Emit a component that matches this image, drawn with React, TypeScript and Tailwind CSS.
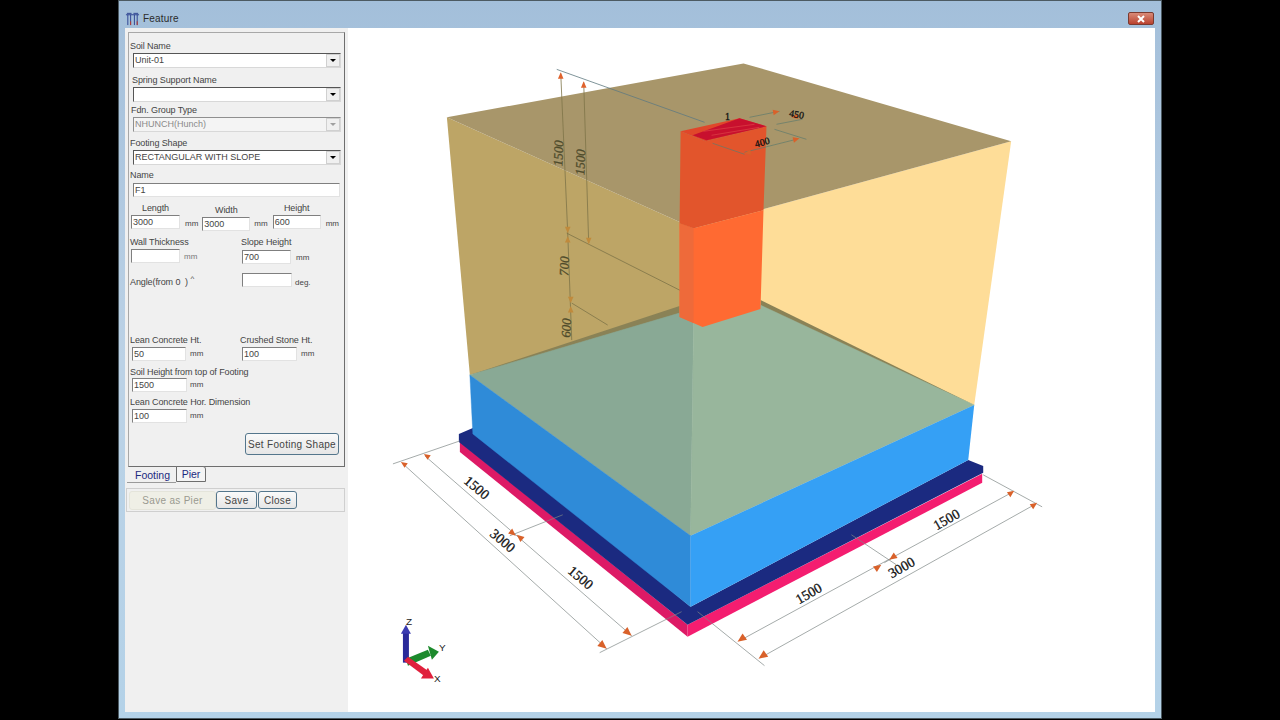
import type { ReactNode } from "react";
import clsx from "clsx";

const FONT = "font-['Liberation_Sans',Arial,sans-serif]";

function Lbl({ className, children }: { className?: string; children: ReactNode }) {
  return <div className={clsx("h-3 leading-3 text-[9px] tracking-[-0.1px] whitespace-nowrap text-[#444444]", className)}>{children}</div>;
}

function Field({ value, className }: { value?: string; className?: string }) {
  return (
    <div
      className={clsx(
        "h-[14px] shrink-0 border border-[#7f7f7f] border-r-[#e2e2e2] border-b-[#e2e2e2] bg-white pl-px text-[9px] leading-[12px] text-[#444444]",
        className
      )}
    >
      {value}
    </div>
  );
}

function Combo({ value, disabled }: { value?: string; disabled?: boolean }) {
  return (
    <div
      className={clsx(
        "mt-px ml-[3px] flex h-[15px] w-[208px] items-center border border-r-[#d8d8d8] border-b-[#d8d8d8] pl-px",
        disabled ? "border-[#8f8f8f] bg-[#f4f4f4] text-[#8a8a8a]" : "border-[#555555] bg-white text-[#444444]"
      )}
    >
      <span className="flex-1 text-[9px] leading-[13px] whitespace-nowrap">{value}</span>
      <span className="flex h-[13px] w-[14px] items-center justify-center border border-[#d0d0d0] bg-[#f0f0f0]">
        <span
          className={clsx(
            "h-0 w-0 border-x-[3px] border-t-[3px] border-x-transparent",
            disabled ? "border-t-[#a0a0a0]" : "border-t-black"
          )}
        />
      </span>
    </div>
  );
}

function Mm({ children = "mm", className }: { children?: ReactNode; className?: string }) {
  return <span className={clsx("text-[8px] leading-3 text-[#444444]", className)}>{children}</span>;
}

function Btn({ children, className }: { children: ReactNode; className?: string }) {
  return (
    <button
      className={clsx(
        "rounded-[3px] border border-[#54768c] bg-gradient-to-b from-[#fafafa] to-[#e6e6e6] text-[10px] tracking-[0.3px] text-[#444444]",
        className
      )}
    >
      {children}
    </button>
  );
}

function FootingForm() {
  return (
    <div className="mt-1 ml-[3px] h-[435px] w-[217px] border border-[#a8a8a8] border-r-[#6e6e6e] border-b-[#6e6e6e] pt-[7px] pl-px">
      <Lbl>Soil Name</Lbl>
      <Combo value="Unit-01" />
      <Lbl className="mt-[6px] ml-0.5">Spring Support Name</Lbl>
      <Combo />
      <Lbl className="mt-0.5 ml-px">Fdn. Group Type</Lbl>
      <Combo value="NHUNCH(Hunch)" disabled />
      <Lbl className="mt-[5px]">Footing Shape</Lbl>
      <Combo value="RECTANGULAR WITH SLOPE" />
      <Lbl className="mt-1">Name</Lbl>
      <Field value="F1" className="mt-0.5 ml-[3px] w-[207px]" />

      <div className="mt-[5px] flex items-start">
        <div className="ml-px w-[49px]">
          <Lbl className="text-center">Length</Lbl>
          <Field value="3000" className="mt-px w-[49px]" />
        </div>
        <Mm className="mt-4 ml-[5px]">mm</Mm>
        <div className="mt-0.5 ml-1 w-[48px]">
          <Lbl className="text-center">Width</Lbl>
          <Field value="3000" className="mt-px w-[48px]" />
        </div>
        <Mm className="mt-4 ml-1">mm</Mm>
        <div className="ml-[5px] w-[48px]">
          <Lbl className="text-center">Height</Lbl>
          <Field value="600" className="mt-px w-[48px]" />
        </div>
        <Mm className="mt-4 ml-[5px]">mm</Mm>
      </div>

      <div className="mt-[5px] flex items-start">
        <div className="w-[110px]">
          <Lbl className="text-[#8f8f8f]">Wall Thickness</Lbl>
          <div className="mt-px flex items-end">
            <Field className="ml-px w-[49px]" />
            <Mm className="ml-1 text-[#777777]">mm</Mm>
          </div>
        </div>
        <div>
          <Lbl className="ml-px">Slope Height</Lbl>
          <div className="mt-0.5 flex items-end">
            <Field value="700" className="ml-0.5 w-[49px]" />
            <Mm className="ml-[5px]">mm</Mm>
          </div>
        </div>
      </div>

      <div className="mt-[9px] flex items-start">
        <div className="w-[112px] pt-[3px]">
          <Lbl className="text-[#8f8f8f]">
            Angle(from 0 &nbsp;) <sup className="text-[8px]">^</sup>
          </Lbl>
        </div>
        <Field className="w-[50px]" />
        <Mm className="mt-1 ml-[3px]">deg.</Mm>
      </div>

      <div className="mt-[45px] flex items-start">
        <div className="w-[110px]">
          <Lbl>Lean Concrete Ht.</Lbl>
          <div className="mt-px flex items-center">
            <Field value="50" className="ml-0.5 w-[54px]" />
            <Mm className="ml-1">mm</Mm>
          </div>
        </div>
        <div>
          <Lbl>Crushed Stone Ht.</Lbl>
          <div className="mt-px flex items-center">
            <Field value="100" className="ml-0.5 w-[55px]" />
            <Mm className="ml-1">mm</Mm>
          </div>
        </div>
      </div>

      <Lbl className="mt-[5px]">Soil Height from top of Footing</Lbl>
      <div className="flex items-center">
        <Field value="1500" className="ml-0.5 w-[55px]" />
        <Mm className="ml-[3px]">mm</Mm>
      </div>
      <Lbl className="mt-1">Lean Concrete Hor. Dimension</Lbl>
      <div className="mt-px flex items-center">
        <Field value="100" className="ml-0.5 w-[55px]" />
        <Mm className="ml-[3px]">mm</Mm>
      </div>

      <div className="mt-[10px] flex justify-end pr-[5px]">
        <Btn className="h-[22px] w-[94px]">Set Footing Shape</Btn>
      </div>
    </div>
  );
}

function SidePanel() {
  return (
    <aside className="flex w-[223px] shrink-0 flex-col bg-[#f0f0f0]">
      <FootingForm />
      <div className="flex h-[16px] pl-[2px]">
        <div className="w-[49px] border-b border-[#9a9a9a] pt-[2px] pl-[2px] text-center text-[10.5px] leading-3 text-[#1c2a80]">Footing</div>
        <div className="-mt-px h-[16px] w-[30px] rounded-tr-[3px] border border-[#6e6e6e] bg-[#f4f4f4] pt-px text-center text-[10.5px] leading-3 text-[#1c2a80]">
          Pier
        </div>
      </div>
      <div className="mt-[5px] ml-px flex h-[24px] w-[219px] items-center border border-[#cfcfcf] pl-[2px]">
        <button className="h-[19px] w-[87px] rounded-[3px] border border-[#e4e4da] bg-[#efefe6] text-[10px] tracking-[0.3px] text-[#9a9a90]">
          Save as Pier
        </button>
        <Btn className="h-[18px] w-[41px]">Save</Btn>
        <Btn className="ml-px h-[18px] w-[39px]">Close</Btn>
      </div>
    </aside>
  );
}

type Seg = [number, number, number, number];

const GREY_LINES: Seg[] = [
  [393, 464, 460, 441],
  [402, 463, 607, 649],
  [425, 456, 632, 636],
  [510, 536, 563, 515],
  [600, 653, 682, 612],
  [984, 475, 1043, 507],
  [763, 657, 1035, 505],
  [742, 640, 1012, 493],
  [852, 535, 897, 565],
  [698, 612, 765, 666],
  [885, 563, 895, 557],
];

const TOP_LINES: Seg[] = [
  [750, 117, 780, 111],
  [777, 124, 803, 119],
  [775, 129, 807, 139],
  [713, 143, 745, 154],
  [745, 152, 797, 139],
];

const OLIVE_LINES: Seg[] = [
  [561, 73, 568, 233],
  [568, 233, 572, 340],
  [584, 82, 589, 243],
  [567, 233, 680, 290],
  [572, 303, 608, 325],
];

// tip x, tip y, direction of the tip in degrees
const ARROWS: [number, number, number][] = [
  [401, 462, 215],
  [424, 454, 215],
  [516, 536, 40],
  [517, 535, 220],
  [632, 636, 40],
  [607, 649, 40],
  [738, 642, 145],
  [759, 659, 145],
  [882, 565, 325],
  [890, 560, 145],
  [1015, 491, 325],
  [1038, 503, 325],
  [780, 111, 350],
  [792, 117, 170],
  [745, 153, 170],
  [800, 138, 345],
];

const OLIVE_ARROWS: [number, number, number][] = [
  [561, 72, 270],
  [584, 81, 270],
  [568, 233, 90],
  [568, 236, 270],
  [589, 244, 90],
  [571, 303, 90],
  [571, 306, 270],
];

function Arrow({ a, fill }: { a: [number, number, number]; fill: string }) {
  // heads get bigger towards the viewer
  const s = Math.max(0.8, Math.min(1.15, a[1] / 580));
  return <polygon points="0,0 -8,-3.5 -8,3.5" fill={fill} transform={`translate(${a[0]} ${a[1]}) rotate(${a[2]}) scale(${s})`} />;
}

function DimText({
  x,
  y,
  r,
  children,
  fill = "#111111",
  size = 14,
  italic,
}: {
  x: number;
  y: number;
  r: number;
  children: string;
  fill?: string;
  size?: number;
  italic?: boolean;
}) {
  return (
    <text
      x={0}
      y={0}
      transform={`translate(${x} ${y}) rotate(${r})`}
      textAnchor="middle"
      dominantBaseline="middle"
      fontFamily="'Liberation Serif', serif"
      fontSize={size}
      fontStyle={italic ? "italic" : "normal"}
      fill={fill}
      stroke={fill}
      strokeWidth={0.3}
    >
      {children}
    </text>
  );
}

function FootingView() {
  return (
    // viewBox keeps the model in window coordinates
    <svg viewBox="348 28 808 684" className="h-full w-full bg-white">
      {/* soil */}
      <polygon points="447,117 694,228 694,322 470,375" fill="#bda566" />
      <polygon points="1012,141 694,228 694,322 975,405" fill="#fedd98" />
      <polygon points="447,117 744,63 1012,141 694,228" fill="#a8966a" />
      <polygon points="470,375 680,306 680,317" fill="#8a8256" />
      <polygon points="761,300 975,405 761,309" fill="#8a8256" />

      {/* slope */}
      <polygon points="470,375 680,313 694,322 691,536" fill="#89a995" stroke="#89a995" strokeWidth={0.6} />
      <polygon points="694,322 761,305 975,405 691,536" fill="#98b69c" stroke="#98b69c" strokeWidth={0.4} />

      {/* footing, lean concrete, crushed stone */}
      <polygon points="460,442 688,625 688,637 460,452" fill="#dd1a66" />
      <polygon points="688,625 983,474 983,483 688,637" fill="#f41d70" />
      <polygon points="459,434 473,428 691,607 969,460 984,466 984,473 688,625 459,442" fill="#1b2a80" />
      <polygon points="470,375 691,536 691,607 473,434" fill="#2f8bd8" stroke="#2f8bd8" strokeWidth={0.4} />
      <polygon points="691,536 975,405 969,460 691,607" fill="#35a0f5" />

      {/* pedestal */}
      <polygon points="680,223 694,228 764,210 761,309 703,327 680,317" fill="#ff6a32" />
      <polygon points="680,223 694,228 694,323 680,317" fill="#ee6a3a" />
      <polygon points="681,131 706,141 767,126 764,210 694,228 680,223" fill="#e2552c" />
      <polygon points="681,131 740,118 767,126 706,141" fill="#e0472a" />
      <polygon points="693,135 740,118 767,126 707,140" fill="#c8102e" />
      <line x1={704} y1={131} x2={755} y2={124} stroke="#e04a4a" strokeWidth={0.6} />
      <line x1={712} y1={135} x2={760} y2={127} stroke="#e04a4a" strokeWidth={0.6} />

      {/* dimensions */}
      <line x1={557} y1={69} x2={705} y2={122} stroke="#5f7a80" strokeWidth={0.8} />
      {GREY_LINES.map((s, i) => (
        <line key={i} x1={s[0]} y1={s[1]} x2={s[2]} y2={s[3]} stroke="#7d8684" strokeWidth={0.7} />
      ))}
      {TOP_LINES.map((s, i) => (
        <line key={i} x1={s[0]} y1={s[1]} x2={s[2]} y2={s[3]} stroke="#5f7a6c" strokeWidth={0.7} />
      ))}
      {OLIVE_LINES.map((s, i) => (
        <line key={i} x1={s[0]} y1={s[1]} x2={s[2]} y2={s[3]} stroke="#7d7448" strokeWidth={0.8} />
      ))}
      {ARROWS.map((a, i) => (
        <Arrow key={i} a={a} fill="#d9612a" />
      ))}
      {OLIVE_ARROWS.map((a, i) => (
        <Arrow key={i} a={a} fill={i < 2 ? "#e0622c" : "#c08a3c"} />
      ))}

      <DimText x={476} y={489} r={40}>1500</DimText>
      <DimText x={502} y={542} r={40}>3000</DimText>
      <DimText x={580} y={579} r={40}>1500</DimText>
      <DimText x={810} y={595} r={-30}>1500</DimText>
      <DimText x={903} y={569} r={-30}>3000</DimText>
      <DimText x={948} y={521} r={-30}>1500</DimText>
      <DimText x={560} y={153} r={-88} fill="#4d4a2a" size={13} italic>1500</DimText>
      <DimText x={582} y={162} r={-88} fill="#4d4a2a" size={13} italic>1500</DimText>
      <DimText x={566} y={266} r={-88} fill="#4d4a2a" size={13} italic>700</DimText>
      <DimText x={568} y={328} r={-88} fill="#4d4a2a" size={13} italic>600</DimText>
      <DimText x={728} y={117} r={0} size={10}>1</DimText>
      <DimText x={797} y={115} r={10} size={10}>450</DimText>
      <DimText x={763} y={143} r={-15} size={10}>400</DimText>

      {/* axis triad */}
      <polygon points="403,663 403,632 409,632 409,663" fill="#2a2a9a" />
      <polygon points="406,625 401,634 411,634" fill="#3a3ab0" />
      <polygon points="406,659 428,650 431,656 408,666" fill="#1c8a2c" />
      <polygon points="439,652 428,646 432,660" fill="#1c8a2c" />
      <polygon points="404,661 408,657 428,671 425,677" fill="#e0203c" />
      <polygon points="434,679 428,668 421,679" fill="#e0203c" />
      <text x={406} y={625} fontSize={10} fontFamily="'Liberation Sans', sans-serif" fill="#222222">Z</text>
      <text x={439} y={651} fontSize={10} fontFamily="'Liberation Sans', sans-serif" fill="#222222">Y</text>
      <text x={434} y={682} fontSize={10} fontFamily="'Liberation Sans', sans-serif" fill="#222222">X</text>
    </svg>
  );
}

export default function App() {
  return (
    <div className={clsx("flex h-[720px] w-full justify-center bg-black", FONT)}>
      <div className="flex h-[719px] w-[1044px] flex-col border border-[#4c5a62] bg-gradient-to-b from-[#a3bfda] via-[#bcd2e6] to-[#b4d2e8]">
        <div className="flex h-[27px] shrink-0 items-center pt-2 pr-[7px] pl-[6px]">
          <svg viewBox="0 0 16 16" className="h-[15px] w-[15px]">
            <path d="M1 4h14M2 2.5h5M9 2.5h5M3 4v11M6 4v11M10 4v11M13 4v11" stroke="#2a3f8f" strokeWidth={1} fill="none" />
            <path d="M6 11v4M13 11v4" stroke="#c0392b" strokeWidth={1} />
          </svg>
          <span className="ml-[3px] text-[10px] tracking-[0.2px] text-[#2b2b2b]">Feature</span>
          <button className="ml-auto flex h-[13px] w-[26px] items-center justify-center rounded-[2px] border border-[#7a3a30] bg-gradient-to-b from-[#d88a78] to-[#b9402e]">
            <svg viewBox="0 0 10 8" className="h-2 w-2.5">
              <path d="M2 1l6 6M8 1L2 7" stroke="#ffffff" strokeWidth={2} />
            </svg>
          </button>
        </div>
        <div className="mx-[6px] mb-[6px] flex min-h-0 flex-1">
          <SidePanel />
          <main className="min-w-0 flex-1">
            <FootingView />
          </main>
        </div>
      </div>
    </div>
  );
}
